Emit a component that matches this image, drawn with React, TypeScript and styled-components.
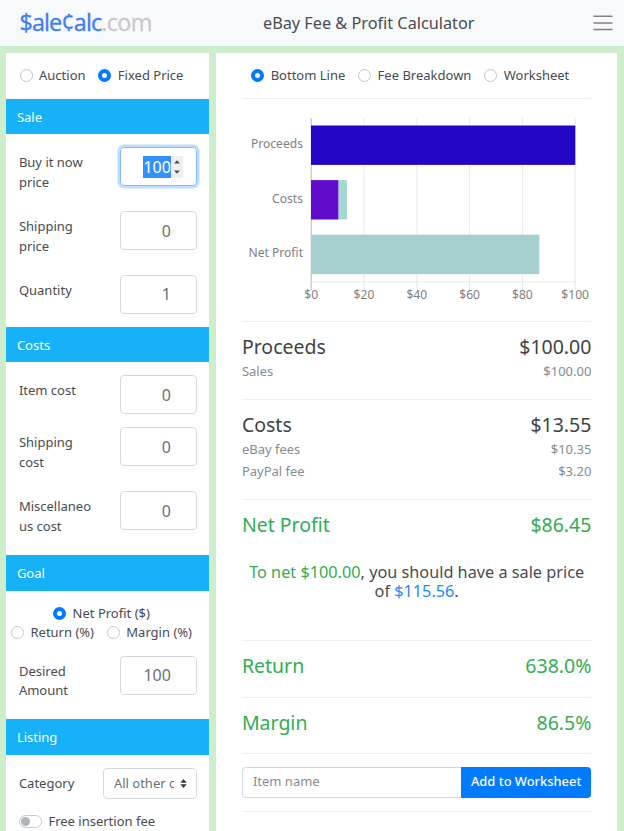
import React from "react";
import styled, { createGlobalStyle } from "styled-components";

const Global = createGlobalStyle`
  *, *::before, *::after { box-sizing: border-box; }
  html, body { margin: 0; padding: 0; }
  body {
    width: 624px;
    height: 831px;
    overflow: hidden;
    background: #cdeecd;
    color: #484c50;
    font-family: "Noto Sans", "Open Sans", sans-serif;
    font-size: 13px;
    line-height: 19.5px;
  }
  input, button, select { font: inherit; margin: 0; }
`;

const Page = styled.div`
  height: 831px;
  overflow: hidden;
`;

const Header = styled.header`
  display: flex;
  justify-content: space-between;
  align-items: center;
  height: 46px;
  padding: 0 11px 0 19.5px;
  background: #f8f9fb;
`;

const Logo = styled.div`
  width: 125px;
  font-family: "Open Sans", sans-serif;
  font-size: 23.4px;
  -webkit-text-stroke: 0.35px currentColor;
  letter-spacing: -0.9px;
  line-height: 30px;
  margin-top: -3px;
  color: #3f7df4;
  white-space: nowrap;
`;

const LogoSuffix = styled.span`
  letter-spacing: -0.6px;
  color: #c9c9cb;
`;

const Title = styled.h1`
  margin: 0 0 1px;
  font-size: 16.25px;
  font-weight: 400;
  line-height: 24px;
  white-space: nowrap;
`;

const MenuIcon = styled.svg`
  display: block;
`;

const Columns = styled.main`
  display: grid;
  grid-template-columns: 203px 401.5px;
  column-gap: 6.5px;
  height: 785px;
  padding: 7px 0 0 6.4px;
`;

const Panel = styled.section`
  background: #fff;
  overflow: hidden;
`;

const Results = styled(Panel)`
  padding: 0 26px;
`;

const RadioLine = styled.div<{ $height?: number }>`
  display: flex;
  justify-content: center;
  align-items: center;
  height: ${(p) => p.$height ?? 45.2}px;
`;

const RadioLabel = styled.label`
  display: flex;
  align-items: center;
  gap: 6.5px;
  margin-right: 12.8px;
  white-space: nowrap;
`;

const Dot = styled.span<{ $on?: boolean }>`
  width: 13px;
  height: 13px;
  border-radius: 50%;
  background: #fff;
  border: ${(p) => (p.$on ? "4px solid #007bff" : "1px solid #bfc6cd")};
`;

const SectionBar = styled.h2`
  height: 35.6px;
  margin: 0;
  padding: 0 10.5px;
  font-size: 13px;
  font-weight: 400;
  line-height: 36px;
  color: #fff;
  background: #16b1f6;
`;

const Fields = styled.div`
  padding: 13px 12.5px 0;
`;

const GoalModes = styled.div`
  padding: 13px 0 0;
`;

const Field = styled.div`
  display: grid;
  grid-template-columns: 74px 77px;
  justify-content: space-between;
  align-items: start;
`;

const FieldLabel = styled.label`
  padding: 6px 0 18.8px;
  overflow-wrap: anywhere;
`;

const NumberBox = styled.div<{ $focus?: boolean }>`
  display: flex;
  align-items: center;
  justify-content: flex-end;
  height: 39px;
  margin-bottom: 13px;
  padding-right: ${(p) => (p.$focus ? 13 : 25)}px;
  border: 1px solid ${(p) => (p.$focus ? "#80bdff" : "#d6dae0")};
  border-radius: 4px;
  box-shadow: ${(p) => (p.$focus ? "0 0 0 2.5px #bfdeff" : "none")};
  color: #6a7077;
  font-size: 16px;
  line-height: 22px;
`;

const Selected = styled.span`
  color: #fff;
  background: #3390ff;
`;

const Spinner = styled.svg`
  display: block;
  background: #f0f0f0;
`;

const SelectBox = styled.div`
  display: flex;
  align-items: center;
  justify-content: space-between;
  width: 94px;
  height: 31px;
  padding: 0 9px 0 10px;
  border: 1px solid #d6dae0;
  border-radius: 4px;
  color: #6a7077;
`;

const SelectText = styled.span`
  width: 60.5px;
  overflow: hidden;
  white-space: nowrap;
`;

const CategoryRow = styled.div`
  display: flex;
  justify-content: space-between;
  align-items: center;
`;

const SwitchRow = styled.div`
  display: flex;
  align-items: center;
  gap: 6.5px;
  margin-top: 12.8px;
`;

const Switch = styled.span`
  width: 23px;
  height: 13px;
  padding: 1px;
  border: 1px solid #c5cad0;
  border-radius: 7px;

  &::before {
    content: "";
    display: block;
    width: 9px;
    height: 9px;
    border-radius: 50%;
    background: #adb5bd;
  }
`;

const Block = styled.div<{ $height: number }>`
  height: ${(p) => p.$height}px;
  border-top: 1px solid #eeeff0;
`;

const Chart = styled.svg`
  display: block;
  font-size: 12.1px;
  fill: #808080;
`;

const Line = styled.div<{ $big?: boolean; $green?: boolean }>`
  display: flex;
  justify-content: space-between;
  font-size: ${(p) => (p.$big ? 19.5 : 13)}px;
  line-height: ${(p) => (p.$big ? 24 : 22)}px;
  padding-top: ${(p) => (p.$big ? 13 : 0)}px;
  margin-bottom: ${(p) => (p.$big ? 1.2 : 0)}px;
  color: ${(p) => (p.$green ? "#35ac52" : p.$big ? "#3e4246" : "#868c92")};
`;

const Advice = styled.p`
  margin: 25.5px 0 0;
  font-size: 16.25px;
  line-height: 19.5px;
  text-align: center;
`;

const Accent = styled.span<{ $color: string }>`
  color: ${(p) => p.$color};
`;

const AddForm = styled.div`
  display: flex;
  height: 31px;
  margin-top: 12.5px;
`;

const ItemName = styled.input`
  width: 219px;
  padding: 0 10px;
  border: 1px solid #d6dae0;
  border-right: 0;
  border-radius: 4px 0 0 4px;
  outline: 0;

  &::placeholder { color: #868c92; opacity: 1; }
`;

const AddButton = styled.button`
  flex: 1;
  padding: 0;
  border: 0;
  border-radius: 0 4px 4px 0;
  color: #fff;
  background: #007bff;
  font-size: 12.9px;
  font-weight: 500;
  white-space: nowrap;
`;

const Radio = ({ on, children }: { on?: boolean; children: React.ReactNode }) => (
  <RadioLabel>
    <Dot $on={on} />
    {children}
  </RadioLabel>
);

const NumberField = ({ label, value }: { label: string; value: string }) => (
  <Field>
    <FieldLabel>{label}</FieldLabel>
    <NumberBox>{value}</NumberBox>
  </Field>
);

const ticks = [0, 20, 40, 60, 80, 100];

const ProfitChart = () => (
  <Chart width="349.5" height="221" viewBox="0 0 349.5 221">
    {ticks.map((t) => (
      <g key={t}>
        <rect x={68.7 + t * 2.64} y="19" width="1" height="172" fill={t === 0 ? "#b8b8b8" : "#e9e9e9"} />
        <text x={69.2 + t * 2.64} y="200" textAnchor="middle">${t}</text>
      </g>
    ))}
    <rect x="69" y="182.5" width="265" height="1" fill="#e9e9e9" />
    <rect x="69" y="26.5" width="264.3" height="39.4" fill="#2306c6" />
    <rect x="69" y="81.1" width="27.6" height="39.4" fill="#610bcb" />
    <rect x="96.6" y="81.1" width="8.4" height="39.4" fill="#a6d6d2" />
    <rect x="69" y="135.7" width="228.4" height="39.4" fill="#a6d0cf" />
    <text x="61" y="49" textAnchor="end">Proceeds</text>
    <text x="61" y="103.5" textAnchor="end">Costs</text>
    <text x="61" y="158" textAnchor="end">Net Profit</text>
  </Chart>
);

export default function App() {
  return (
    <Page>
      <Global />
      <Header>
        <Logo>$ale¢alc<LogoSuffix>.com</LogoSuffix></Logo>
        <Title>eBay Fee &amp; Profit Calculator</Title>
        <MenuIcon width="20" height="18" viewBox="0 0 20 18" stroke="#808184" strokeWidth="1.4" strokeLinecap="round">
          <path d="M1 2.2H19M1 9H19M1 15.5H19" />
        </MenuIcon>
      </Header>
      <Columns>
        <Panel>
          <RadioLine $height={45.7}>
            <Radio>Auction</Radio>
            <Radio on>Fixed Price</Radio>
          </RadioLine>
          <SectionBar>Sale</SectionBar>
          <Fields>
            <Field>
              <FieldLabel>Buy it now price</FieldLabel>
              <NumberBox $focus>
                <Selected>100</Selected>
                <Spinner width="12" height="22" viewBox="0 0 12 22">
                  <path d="M3 7.5L6 4.2L9 7.5ZM3 14.5L6 17.8L9 14.5Z" fill="#505050" />
                </Spinner>
              </NumberBox>
            </Field>
            <NumberField label="Shipping price" value="0" />
            <NumberField label="Quantity" value="1" />
          </Fields>
          <SectionBar>Costs</SectionBar>
          <Fields>
            <NumberField label="Item cost" value="0" />
            <NumberField label="Shipping cost" value="0" />
            <NumberField label="Miscellaneous cost" value="0" />
          </Fields>
          <SectionBar>Goal</SectionBar>
          <GoalModes>
            <RadioLine $height={19.5}>
              <Radio on>Net Profit ($)</Radio>
            </RadioLine>
            <RadioLine $height={19.5}>
              <Radio>Return (%)</Radio>
              <Radio>Margin (%)</Radio>
            </RadioLine>
          </GoalModes>
          <Fields>
            <NumberField label="Desired Amount" value="100" />
          </Fields>
          <SectionBar>Listing</SectionBar>
          <Fields>
            <CategoryRow>
              <span>Category</span>
              <SelectBox>
                <SelectText>All other categories</SelectText>
                <svg width="7" height="9" viewBox="0 0 7 9" fill="#343a40">
                  <path d="M0.3 3.8L3.5 0L6.7 3.8ZM0.3 5.2L3.5 9L6.7 5.2Z" />
                </svg>
              </SelectBox>
            </CategoryRow>
            <SwitchRow>
              <Switch />
              Free insertion fee
            </SwitchRow>
          </Fields>
        </Panel>
        <Results>
          <RadioLine>
            <Radio on>Bottom Line</Radio>
            <Radio>Fee Breakdown</Radio>
            <Radio>Worksheet</Radio>
          </RadioLine>
          <Block $height={222.6}>
            <ProfitChart />
          </Block>
          <Block $height={78.3}>
            <Line $big><span>Proceeds</span><span>$100.00</span></Line>
            <Line><span>Sales</span><span>$100.00</span></Line>
          </Block>
          <Block $height={100}>
            <Line $big><span>Costs</span><span>$13.55</span></Line>
            <Line><span>eBay fees</span><span>$10.35</span></Line>
            <Line><span>PayPal fee</span><span>$3.20</span></Line>
          </Block>
          <Block $height={141}>
            <Line $big $green><span>Net Profit</span><span>$86.45</span></Line>
            <Advice>
              <Accent $color="#35ac52">To net $100.00</Accent>, you should have a sale price of{" "}
              <Accent $color="#2589f5">$115.56</Accent>.
            </Advice>
          </Block>
          <Block $height={56.5}>
            <Line $big $green><span>Return</span><span>638.0%</span></Line>
          </Block>
          <Block $height={56.5}>
            <Line $big $green><span>Margin</span><span>86.5%</span></Line>
          </Block>
          <Block $height={57.5}>
            <AddForm>
              <ItemName placeholder="Item name" />
              <AddButton>Add to Worksheet</AddButton>
            </AddForm>
          </Block>
          <Block $height={20} />
        </Results>
      </Columns>
    </Page>
  );
}
